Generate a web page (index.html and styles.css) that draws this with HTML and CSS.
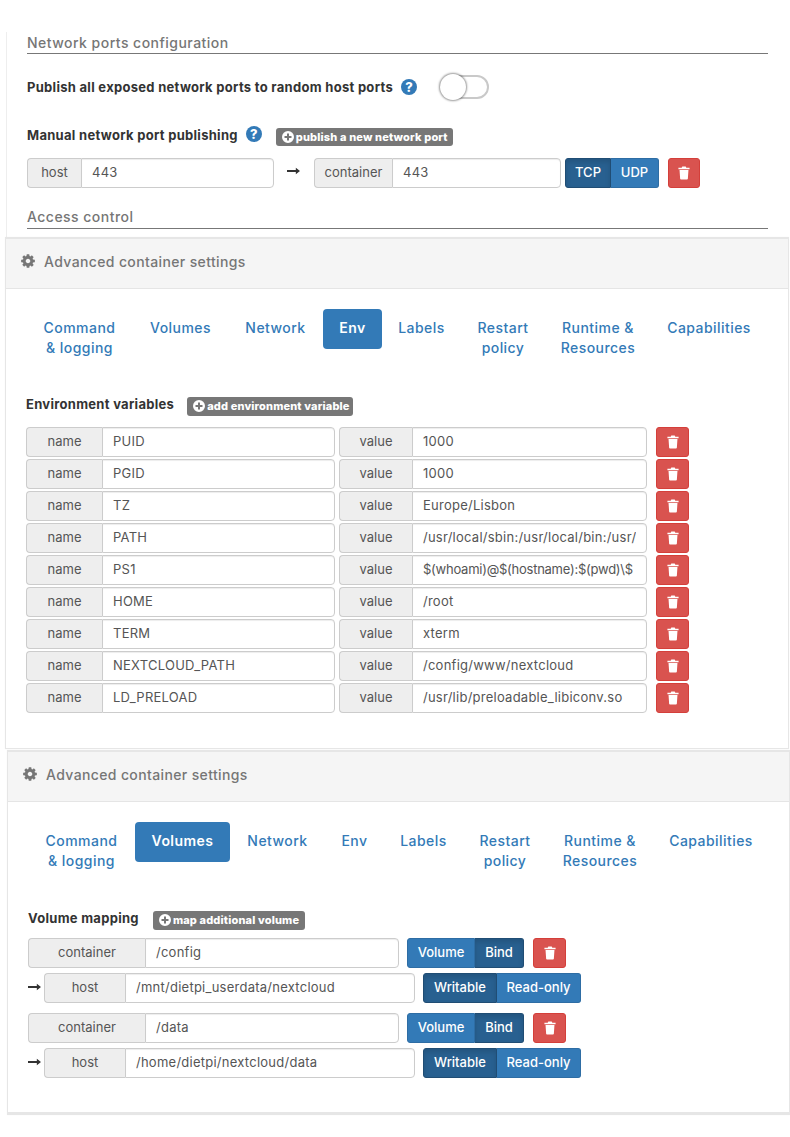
FILE: index.html
```html
<!DOCTYPE html>
<html lang="en">
<head>
<meta charset="utf-8">
<title>Container settings</title>
<link rel="stylesheet" href="styles.css">
</head>
<body>
<svg class="sprite" xmlns="http://www.w3.org/2000/svg">
  <symbol id="trash" viewBox="0 0 14 16"><path d="M5 .5h4l.7 1.500H13.500v1.700H.5V2h3.800zM1.800 4.600h10.400l-.7 10a1 1 0 0 1-1 .9H3.500a1 1 0 0 1-1-.9z"/></symbol>
  <symbol id="arrow" viewBox="0 0 14 10"><path d="M0 4h9.500V1.500L14 5 9.500 8.500V6H0z"/></symbol>
  <symbol id="plus" viewBox="0 0 24 24"><path fill-rule="evenodd" d="M12 0a12 12 0 1 1 0 24a12 12 0 0 1 0-24zM10 5v5H5v4h5v5h4v-5h5v-4h-5V5z"/></symbol>
  <symbol id="cog" viewBox="0 0 1792 1792"><path d="M1152 896q0-106-75-181t-181-75-181 75-75 181 75 181 181 75 181-75 75-181zm512-109v222q0 12-8 23t-20 13l-185 28q-19 54-39 91 35 50 107 138 10 12 10 25t-9 23q-27 37-99 108t-94 71q-12 0-26-9l-138-108q-44 23-91 38-16 136-29 186-7 28-36 28h-222q-14 0-24.500-8.500t-11.500-21.500l-28-184q-49-16-90-37l-141 107q-10 9-25 9-14 0-25-11-126-114-165-168-7-10-7-23 0-12 8-23 15-21 51-66.500t54-70.500q-27-50-41-99l-183-27q-13-2-21-12.500t-8-23.500v-222q0-12 8-23t19-13l186-28q14-46 39-92-40-57-107-138-10-12-10-24 0-10 9-23 26-36 98.500-107.500t94.500-71.500q13 0 26 10l138 107q44-23 91-38 16-136 29-186 7-28 36-28h222q14 0 24.500 8.500t11.500 21.500l28 184q49 16 90 37l142-107q9-9 24-9 13 0 25 10 129 119 165 170 7 8 7 22 0 12-8 23-15 21-51 66.500t-54 70.500q26 50 41 98l183 28q13 2 21 12.500t8 23.500z"/></symbol>
</svg>

<section class="ports">
  <h2 class="section-title">Network ports configuration</h2>
  <div class="publish-row">
    <span class="label">Publish all exposed network ports to random host ports</span>
    <span class="help">?</span>
    <span class="toggle"><span class="knob"></span></span>
  </div>
  <div class="manual-row">
    <span class="label">Manual network port publishing</span>
    <span class="help">?</span>
    <span class="tag tag-port"><svg class="tag-icon"><use href="#plus"/></svg>publish a new network port</span>
  </div>
  <div class="port-row">
    <div class="group group-host"><span class="addon">host</span><input class="field" value="443"></div>
    <svg class="arrow"><use href="#arrow"/></svg>
    <div class="group group-container"><span class="addon">container</span><input class="field" value="443"></div>
    <div class="btns proto"><span class="btn on">TCP</span><span class="btn">UDP</span></div>
    <span class="del"><svg><use href="#trash"/></svg></span>
  </div>
  <h2 class="section-title access">Access control</h2>
</section>

<section class="panel panel-env">
  <header class="panel-head"><svg class="cog"><use href="#cog"/></svg>Advanced container settings</header>
  <nav class="tabs">
    <a class="tab">Command<br>&amp; logging</a>
    <a class="tab">Volumes</a>
    <a class="tab">Network</a>
    <a class="tab active">Env</a>
    <a class="tab">Labels</a>
    <a class="tab">Restart<br>policy</a>
    <a class="tab">Runtime &amp;<br>Resources</a>
    <a class="tab">Capabilities</a>
  </nav>
  <div class="heading-row env-heading">
    <span class="label">Environment variables</span>
    <span class="tag tag-env"><svg class="tag-icon"><use href="#plus"/></svg>add environment variable</span>
  </div>
  <div class="env-list">
    <div class="env-row"><div class="group"><span class="addon">name</span><input class="field" value="PUID"></div><div class="group"><span class="addon">value</span><input class="field" value="1000"></div><span class="del"><svg><use href="#trash"/></svg></span></div>
    <div class="env-row"><div class="group"><span class="addon">name</span><input class="field" value="PGID"></div><div class="group"><span class="addon">value</span><input class="field" value="1000"></div><span class="del"><svg><use href="#trash"/></svg></span></div>
    <div class="env-row"><div class="group"><span class="addon">name</span><input class="field" value="TZ"></div><div class="group"><span class="addon">value</span><input class="field" value="Europe/Lisbon"></div><span class="del"><svg><use href="#trash"/></svg></span></div>
    <div class="env-row"><div class="group"><span class="addon">name</span><input class="field" value="PATH"></div><div class="group"><span class="addon">value</span><input class="field" value="/usr/local/sbin:/usr/local/bin:/usr/sbin:/usr/bin:/sbin:/bin"></div><span class="del"><svg><use href="#trash"/></svg></span></div>
    <div class="env-row"><div class="group"><span class="addon">name</span><input class="field" value="PS1"></div><div class="group"><span class="addon">value</span><input class="field tight" value="$(whoami)@$(hostname):$(pwd)\$"></div><span class="del"><svg><use href="#trash"/></svg></span></div>
    <div class="env-row"><div class="group"><span class="addon">name</span><input class="field" value="HOME"></div><div class="group"><span class="addon">value</span><input class="field" value="/root"></div><span class="del"><svg><use href="#trash"/></svg></span></div>
    <div class="env-row"><div class="group"><span class="addon">name</span><input class="field" value="TERM"></div><div class="group"><span class="addon">value</span><input class="field" value="xterm"></div><span class="del"><svg><use href="#trash"/></svg></span></div>
    <div class="env-row"><div class="group"><span class="addon">name</span><input class="field" value="NEXTCLOUD_PATH"></div><div class="group"><span class="addon">value</span><input class="field" value="/config/www/nextcloud"></div><span class="del"><svg><use href="#trash"/></svg></span></div>
    <div class="env-row"><div class="group"><span class="addon">name</span><input class="field" value="LD_PRELOAD"></div><div class="group"><span class="addon">value</span><input class="field" value="/usr/lib/preloadable_libiconv.so"></div><span class="del"><svg><use href="#trash"/></svg></span></div>
  </div>
</section>

<section class="panel panel-vol">
  <header class="panel-head"><svg class="cog"><use href="#cog"/></svg>Advanced container settings</header>
  <nav class="tabs">
    <a class="tab">Command<br>&amp; logging</a>
    <a class="tab active">Volumes</a>
    <a class="tab">Network</a>
    <a class="tab">Env</a>
    <a class="tab">Labels</a>
    <a class="tab">Restart<br>policy</a>
    <a class="tab">Runtime &amp;<br>Resources</a>
    <a class="tab">Capabilities</a>
  </nav>
  <div class="heading-row vol-heading">
    <span class="label">Volume mapping</span>
    <span class="tag tag-vol"><svg class="tag-icon"><use href="#plus"/></svg>map additional volume</span>
  </div>
  <div class="volume">
    <div class="vol-top"><div class="group"><span class="addon">container</span><input class="field" value="/config"></div><div class="btns type"><span class="btn">Volume</span><span class="btn on">Bind</span></div><span class="del"><svg><use href="#trash"/></svg></span></div>
    <div class="vol-bottom"><svg class="arrow"><use href="#arrow"/></svg><div class="group"><span class="addon">host</span><input class="field" value="/mnt/dietpi_userdata/nextcloud"></div><div class="btns mode"><span class="btn on">Writable</span><span class="btn">Read-only</span></div></div>
  </div>
  <div class="volume">
    <div class="vol-top"><div class="group"><span class="addon">container</span><input class="field" value="/data"></div><div class="btns type"><span class="btn">Volume</span><span class="btn on">Bind</span></div><span class="del"><svg><use href="#trash"/></svg></span></div>
    <div class="vol-bottom"><svg class="arrow"><use href="#arrow"/></svg><div class="group"><span class="addon">host</span><input class="field" value="/home/dietpi/nextcloud/data"></div><div class="btns mode"><span class="btn on">Writable</span><span class="btn">Read-only</span></div></div>
  </div>
</section>
</body>
</html>
```

FILE: styles.css
```css
* { box-sizing: border-box; }
html, body { margin: 0; padding: 0; background: #fff; }
body {
  width: 790px;
  height: 1137px;
  overflow: hidden;
  padding-top: 32px;
  font-family: Inter, "Open Sans", "Liberation Sans", sans-serif;
  font-size: 13px;
  color: #555;
}
.sprite { display: none; }

/* Top section */
.ports {
  margin-left: 6px;
  height: 205px;
  border-left: 1px solid #eee;
  padding: 0 22px 0 20px;
}
.section-title {
  margin: 0;
  height: 22px;
  padding-top: 2px;
  border-bottom: 1px solid #777;
  font-size: 14px;
  line-height: 17px;
  font-weight: 500;
  color: #767676;
  letter-spacing: .47px;
}
.access { margin-top: 18px; height: 23px; }
.label {
  font-size: 13px;
  font-weight: 700;
  color: #333;
  letter-spacing: .29px;
  white-space: nowrap;
}
.publish-row {
  display: flex;
  align-items: center;
  height: 26px;
  margin-top: 20px;
}
.publish-row .help { margin-left: 8px; }
.toggle {
  display: block;
  width: 49px;
  height: 24px;
  margin-left: 23px;
  border: 2px solid #c9c9c9;
  border-radius: 13px;
  background: #fff;
}
.knob {
  display: block;
  width: 26px;
  height: 26px;
  margin: -3px 0 0 -2px;
  border-radius: 50%;
  background: #fff;
  box-shadow: 0 0 2px 1px rgba(0, 0, 0, .4);
}
.help {
  display: flex;
  align-items: center;
  justify-content: center;
  width: 16px;
  height: 16px;
  border-radius: 50%;
  background: #337ab7;
  color: #fff;
  font-size: 13px;
  font-weight: 800;
  line-height: 1;
}
.manual-row {
  display: flex;
  align-items: center;
  height: 20px;
  margin-top: 25px;
}
.manual-row .help { margin: -2px 0 0 8px; }
.tag {
  display: inline-flex;
  align-items: center;
  height: 19px;
  margin-top: 4px;
  padding-left: 6px;
  border-radius: 3px;
  background: #777;
  color: #fff;
  font-size: 11px;
  font-weight: 800;
  white-space: nowrap;
  letter-spacing: .15px;
}
.tag-icon {
  flex: none;
  width: 12px;
  height: 12px;
  margin-right: 2px;
  fill: #fff;
}
.tag-port { width: 177px; height: 18px; margin-left: 14px; }
.tag-env { width: 166px; margin-left: 13px; }
.tag-vol { width: 152px; margin-left: 14px; }

.group { display: flex; height: 30px; min-width: 0; }
.addon {
  flex: none;
  display: flex;
  align-items: center;
  justify-content: center;
  padding-bottom: 2px;
  border: 1px solid #ccc;
  border-right: 0;
  border-radius: 4px 0 0 4px;
  background: #eee;
  color: #555;
  font-size: 13px;
}
.field {
  flex: 1;
  min-width: 0;
  width: 100%;
  height: 30px;
  padding: 0 10px 2px;
  border: 1px solid #ccc;
  border-radius: 0 4px 4px 0;
  background: #fff;
  color: #555;
  font: inherit;
  letter-spacing: .25px;
  box-shadow: inset 0 1px 1px rgba(0, 0, 0, .075);
  outline: 0;
}
.field.tight { letter-spacing: -.25px; }
.port-row {
  display: flex;
  align-items: center;
  margin-top: 13px;
}
.group-host { width: 247px; }
.group-host .addon { width: 54px; }
.group-container { width: 247px; }
.group-container .addon { width: 78px; }
.arrow {
  flex: none;
  width: 13px;
  height: 10px;
  fill: #333;
}
.port-row .arrow { margin: -4px 14px 0 13px; }
.btns { display: flex; height: 30px; flex: none; }
.btn {
  display: flex;
  align-items: center;
  justify-content: center;
  padding-bottom: 2px;
  border: 1px solid #2e6da4;
  background: #337ab7;
  color: #fff;
  font-size: 13px;
  font-weight: 500;
}
.btn:first-child { border-radius: 3px 0 0 3px; }
.btn:last-child { border-radius: 0 3px 3px 0; border-left: 0; }
.btn.on {
  background: #286090;
  border-color: #204d74;
  box-shadow: inset 0 3px 5px rgba(0, 0, 0, .125);
}
.proto { margin-left: 4px; }
.proto .btn:first-child { width: 46px; }
.proto .btn:last-child { width: 48px; }
.del {
  flex: none;
  display: flex;
  align-items: center;
  justify-content: center;
  width: 33px;
  height: 30px;
  border: 1px solid #d43f3a;
  border-radius: 3px;
  background: #d9534f;
}
.del svg { width: 12px; height: 14px; fill: #fff; }
.port-row .del { width: 32px; margin-left: 9px; }

/* Panels */
.panel {
  border: 1px solid #e6e6e6;
  border-top-width: 2px;
  box-shadow: 0 0 1px rgba(0, 0, 0, .06);
  background: #fff;
}
.panel-env { width: 784px; height: 512px; margin-left: 5px; }
.panel-vol { width: 783px; height: 365px; margin: 1px 0 0 7px; border-bottom-width: 3px; }
.panel-head {
  display: flex;
  align-items: center;
  height: 50px;
  padding: 0 0 5px 14px;
  border-bottom: 1px solid #e5e5e5;
  background: #f5f5f5;
  color: #767676;
  font-size: 14px;
  font-weight: 500;
  letter-spacing: .37px;
}
.cog { width: 16px; height: 16px; margin-right: 8px; fill: #767676; }
.tabs {
  display: grid;
  grid-template-columns: 107px 95px 95px 59px 79px 84px 106px 116px;
  align-items: start;
  margin: 20px 0 0 20px;
}
.tab {
  display: block;
  padding: 9px 0 11px;
  border-radius: 4px;
  color: #337ab7;
  font-size: 14px;
  line-height: 20px;
  font-weight: 500;
  text-align: center;
  letter-spacing: .45px;
}
.tab.active {
  background: #337ab7;
  color: #fff;
  font-weight: 600;
}
.heading-row { display: flex; align-items: center; height: 20px; }
.tabs + .env-heading { margin: 25px 0 0 20px; }
.env-list { display: flex; flex-direction: column; gap: 2px; margin: 13px 0 0 20px; }
.env-row {
  display: grid;
  grid-template-columns: 309px 308px 33px;
  column-gap: 4px;
}
.env-row .group:first-child .addon { width: 76px; }
.env-row .group:nth-child(2) .addon { width: 73px; }
.env-row .del { margin-left: 5px; }

.tabs + .vol-heading { margin: 26px 0 0 20px; }
.volume { margin: 0 0 0 20px; }
.vol-heading + .volume { margin-top: 10px; }
.volume + .volume { margin-top: 10px; }
.vol-top { display: flex; align-items: center; }
.vol-top .group { width: 371px; }
.vol-top .addon { width: 117px; }
.vol-bottom { display: flex; align-items: center; margin-top: 5px; }
.vol-bottom .arrow { margin: -2px 3px 0 0; }
.vol-bottom .group { width: 371px; }
.vol-bottom .addon { width: 81px; }
.type { margin-left: 8px; }
.type .btn:first-child { width: 68px; }
.type .btn:last-child { width: 49px; }
.vol-top .del { margin-left: 9px; }
.mode { margin-left: 8px; }
.mode .btn:first-child { width: 74px; }
.mode .btn:last-child { width: 84px; }
```
